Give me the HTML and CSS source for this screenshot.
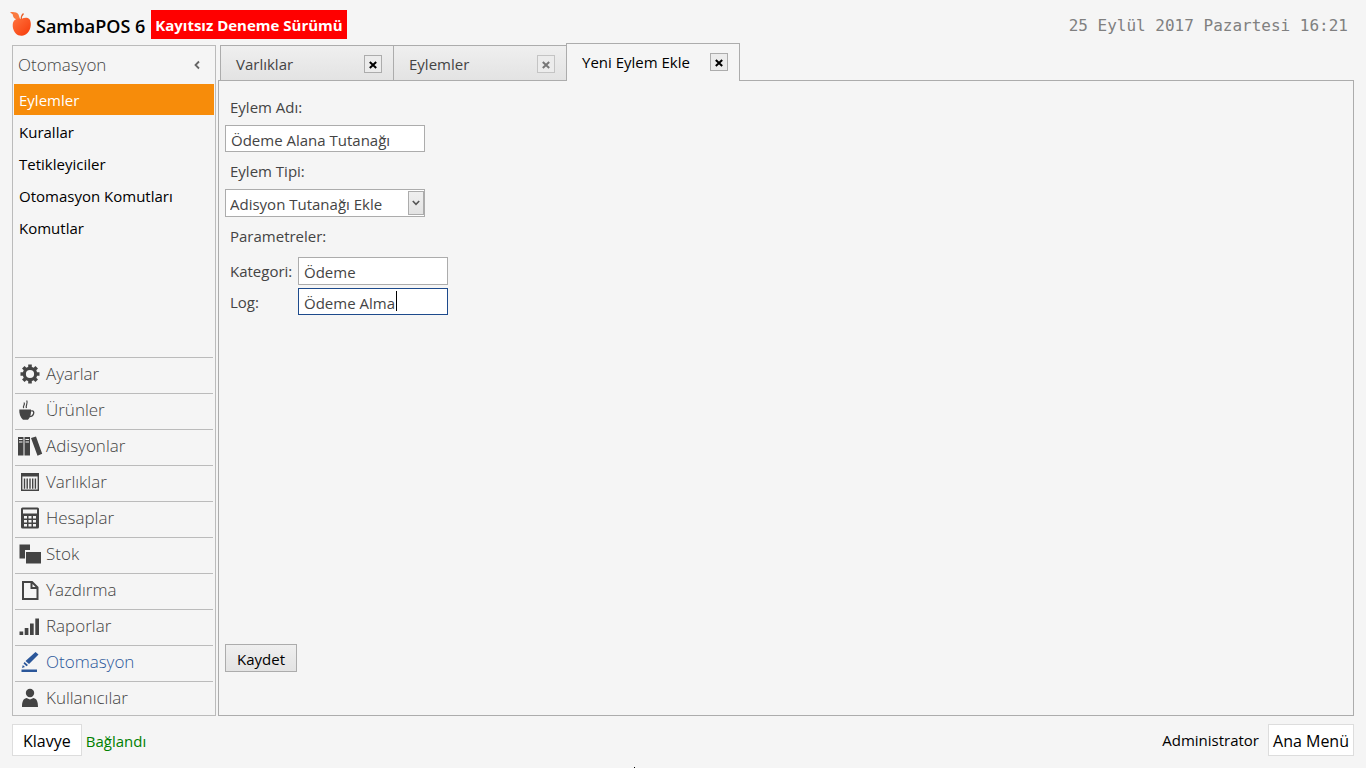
FILE: index.html
```html
<!DOCTYPE html>
<html lang="tr">
<head>
<meta charset="utf-8">
<meta name="viewport" content="width=device-width, initial-scale=1">
<title>SambaPOS 6</title>
<link rel="stylesheet" href="styles.css">
</head>
<body class="app">
<header class="topbar">
  <svg class="logo" viewBox="0 0 22 26" aria-hidden="true">
    <defs><linearGradient id="fruit" x1="0" y1="0" x2="1" y2="1"><stop offset="0" stop-color="#ff7440"/><stop offset="1" stop-color="#f63a08"/></linearGradient></defs>
    <path fill="#fa7a40" d="M0 .3C3-.3 7 0 8.500 2.500l1.700 5C5.500 8 2.800 6 2.800 2.500z"/>
    <path fill="none" stroke="#e8622c" stroke-width="1.300" d="M11.500 7.500C11 5.500 11.500 3.500 13.500 1.500"/>
    <path fill="url(#fruit)" d="M11.500 7C14 5.500 17.500 5.200 19.300 7c2.500 3 2 10.500-1.800 14-2 1.900-3.700 2.500-5.500 2.700-2.200.2-4.700-.5-6.200-2.200C2.300 18 1.800 11 4.200 8.500c1.800-2 4.800-2.700 7.300-1.500z"/>
  </svg>
  <h1 class="brand">SambaPOS 6</h1>
  <span class="trial">Kayıtsız Deneme Sürümü</span>
  <time class="clock" datetime="2017-09-25T16:21">25 Eylül 2017 Pazartesi 16:21</time>
</header>

<div class="workspace">
  <aside class="sidebar">
    <div class="side-head">
      <h2 class="side-title">Otomasyon</h2>
      <button class="collapse" type="button" aria-label="Daralt"><svg width="8" height="10" viewBox="0 0 8 10"><path d="M6 1.500 2.500 5 6 8.500" fill="none" stroke="#666" stroke-width="1.800"/></svg></button>
    </div>
    <nav class="submenu" aria-label="Otomasyon">
      <a class="sub-link current" href="#">Eylemler</a>
      <a class="sub-link" href="#">Kurallar</a>
      <a class="sub-link" href="#">Tetikleyiciler</a>
      <a class="sub-link" href="#">Otomasyon Komutları</a>
      <a class="sub-link" href="#">Komutlar</a>
    </nav>
    <nav class="modules" aria-label="Modüller">
      <a class="module" href="#"><svg class="icon" viewBox="0 0 26 24"><g fill="none" stroke="#444"><circle cx="13" cy="12" r="5.700" stroke-width="3.200"/><path stroke-width="3.600" d="M13 2.500v3M13 18.500v3M3.500 12h3M19.500 12h3M6.300 5.300l2 2M17.700 16.700l2 2M6.300 18.700l2-2M17.700 7.300l2-2"/></g></svg>Ayarlar</a>
      <a class="module" href="#"><svg class="icon" viewBox="0 0 26 24"><path fill="#444" d="M2.300 11.500H14c.3 4-.6 8-3 10.300H6C3.300 19.500 2 15.500 2.300 11.500z"/><path fill="none" stroke="#444" stroke-width="1.300" d="M14 13c2.500-.8 3.200 1 2.500 3-.6 1.700-2 2.600-4 2.700"/><path fill="none" stroke="#444" stroke-width="1.200" d="M6.800 10C5 8 8.800 7 7 4.500M9.500 10C8 7.500 11.500 5.500 9.700 2.500"/></svg>Ürünler</a>
      <a class="module" href="#"><svg class="icon" viewBox="0 0 26 24"><path fill="#444" d="M1 3h5.500v18.500H1zM7.500 3H13v18.500H7.500zM14 4l5-1.500 6.200 17.200-4.700 2z"/><path stroke="#f5f5f5" stroke-width="1.200" d="M2 5.500h3.500M2 8h3.500M8.500 5.500H12M8.500 8H12"/></svg>Adisyonlar</a>
      <a class="module" href="#"><svg class="icon" viewBox="0 0 26 24"><path fill="#444" d="M4 3h18v3.500H4z"/><path fill="none" stroke="#444" stroke-width="1.400" d="M4.700 6v14.300h16.600V6"/><path stroke="#444" stroke-width="1.400" d="M7.500 8.500v10.300M10.200 8.500v10.300M13 8.500v10.300M15.700 8.500v10.300M18.400 8.500v10.300"/></svg>Varlıklar</a>
      <a class="module" href="#"><svg class="icon" viewBox="0 0 26 24"><rect x="4" y="1.500" width="18" height="21" rx="1.500" fill="#444"/><path fill="#f5f5f5" d="M6 3.500h14v4H6zM7 10h3v2.500H7zM11.500 10h3v2.500h-3zM16 10h3v2.500h-3zM7 14h3v2.500H7zM11.500 14h3v2.500h-3zM16 14h3v2.500h-3zM7 18h3v2.500H7zM11.500 18h3v2.500h-3zM16 18h3v2.500h-3z"/></svg>Hesaplar</a>
      <a class="module" href="#"><svg class="icon" viewBox="0 0 26 24"><path fill="#444" d="M2.500 2.500H13V8H8v8.500H2.500zM9 10h15v11.500H9z"/></svg>Stok</a>
      <a class="module" href="#"><svg class="icon" viewBox="0 0 26 24"><path fill="none" stroke="#444" stroke-width="2" d="M6 4h9l5.500 5.500V21H6zM14.500 4v6h6"/></svg>Yazdırma</a>
      <a class="module" href="#"><svg class="icon" viewBox="0 0 26 24"><path fill="#444" d="M2.500 17.500h3.700V21H2.500zM7.700 14h3.700v7H7.700zM13 9.500h3.700V21H13zM18.300 4.500H22V21h-3.700z"/></svg>Raporlar</a>
      <a class="module active" href="#"><svg class="icon" viewBox="0 0 26 24"><path fill="#2b579a" d="M4.500 19.500H20V22H4.500zM18.500 2 21.500 4.500l-9.500 9.500-3.500-3zM7.500 12l3.500 3-1.500 1.300L6.500 13.500zM5.800 15 8 17 5 18z"/></svg>Otomasyon</a>
      <a class="module" href="#"><svg class="icon" viewBox="0 0 26 24"><circle cx="13" cy="7" r="4.200" fill="#444"/><path fill="#444" d="M5 21c0-5 1-8.300 4.500-9l3.500 1.500L16.500 12c3.500.7 4.500 4 4.500 9z"/></svg>Kullanıcılar</a>
    </nav>
  </aside>

  <main class="content">
    <div class="tabs">
      <div class="tab"><a class="tab-name" href="#">Varlıklar</a><button class="close" type="button" aria-label="Varlıklar sekmesini kapat"><svg width="8" height="8" viewBox="0 0 8 8"><path d="M.8 1l6.400 6M7.200 1 .8 7" stroke="currentColor" stroke-width="2"/></svg></button></div>
      <div class="tab"><a class="tab-name" href="#">Eylemler</a><button class="close dim" type="button" aria-label="Eylemler sekmesini kapat"><svg width="8" height="8" viewBox="0 0 8 8"><path d="M.8 1l6.400 6M7.200 1 .8 7" stroke="currentColor" stroke-width="2"/></svg></button></div>
      <div class="tab selected"><a class="tab-name" href="#">Yeni Eylem Ekle</a><button class="close" type="button" aria-label="Yeni Eylem Ekle sekmesini kapat"><svg width="8" height="8" viewBox="0 0 8 8"><path d="M.8 1l6.400 6M7.200 1 .8 7" stroke="currentColor" stroke-width="2"/></svg></button></div>
    </div>
    <form class="panel">
      <label class="label" for="name">Eylem Adı:</label>
      <input class="field wide" id="name" type="text" value="Ödeme Alana Tutanağı">
      <label class="label" for="type">Eylem Tipi:</label>
      <div class="picker">
        <select class="field wide select" id="type"><option>Adisyon Tutanağı Ekle</option></select>
        <span class="arrow"><svg width="8" height="6" viewBox="0 0 8 6"><path d="M.8 1 4 4.400 7.200 1" fill="none" stroke="#555" stroke-width="1.600"/></svg></span>
      </div>
      <span class="label">Parametreler:</span>
      <div class="params">
        <label for="category">Kategori:</label>
        <input class="field" id="category" type="text" value="Ödeme">
        <label for="log">Log:</label>
        <div class="editing">
          <input class="field focused" id="log" type="text" value="Ödeme Alma">
          <span class="caret"></span>
        </div>
      </div>
      <button class="save" type="button">Kaydet</button>
    </form>
  </main>
</div>

<footer class="bottombar">
  <button class="flat keyboard" type="button">Klavye</button>
  <span class="status">Bağlandı</span>
  <span class="user">Administrator</span>
  <button class="flat" type="button">Ana Menü</button>
</footer>
<span class="pointer"></span>
</body>
</html>
```

FILE: styles.css
```css
* { box-sizing: border-box; }

.app {
  margin: 0;
  min-height: 100vh;
  display: flex;
  flex-direction: column;
  background: #f5f5f5;
  color: #444;
  font: 15px/20px "Open Sans", "Noto Sans", sans-serif;
}

button, input, select { font: inherit; color: inherit; }
a { color: inherit; text-decoration: none; }

/* Top bar */
.topbar {
  display: flex;
  align-items: center;
  height: 43px;
  padding: 6px 18px 0 10px;
}
.logo { width: 22px; height: 26px; }
.brand {
  margin: 0 6px 0 4px;
  padding-top: 2px;
  color: #000;
  font-size: 18px;
  line-height: 24px;
  font-weight: 600;
}
.trial {
  padding: 5px 4px 3px;
  background: #f00;
  color: #fff;
  font-size: 15px;
  line-height: 21px;
  font-weight: 700;
}
.clock {
  margin-left: auto;
  padding-top: 2px;
  color: #808080;
  font: 16px/20px "DejaVu Sans Mono", monospace;
}

/* Sidebar */
.workspace {
  flex: 1;
  display: flex;
  gap: 2px;
  padding: 0 12px;
}
.sidebar {
  display: flex;
  flex-direction: column;
  width: 204px;
  margin-top: 2px;
  padding: 0 1px;
  border: 1px solid #bbb;
}
.side-head {
  display: flex;
  align-items: center;
  justify-content: space-between;
  height: 38px;
  padding: 0 13px 0 4px;
}
.side-title {
  margin: 0;
  color: #444;
  font-size: 17px;
  line-height: 24px;
  font-weight: 300;
}
.collapse {
  display: flex;
  padding: 0;
  border: 0;
  background: none;
}
.submenu { display: flex; flex-direction: column; color: #000; }
.sub-link { padding: 7px 5px 5px; }
.sub-link.current { padding-top: 6px; background: #f78c0a; color: #fff; }
.modules { margin-top: auto; }
.module {
  display: flex;
  align-items: center;
  gap: 3px;
  height: 36px;
  margin: 0 1px;
  padding: 0 2px 4px;
  border-top: 1px solid #bbb;
  color: #444;
  font-size: 17px;
  line-height: 24px;
  font-weight: 300;
}
.module:last-child { height: 34px; padding-bottom: 2px; }
.module.active { color: #2b579a; }
.icon { width: 26px; height: 24px; }

/* Tabs */
.content {
  flex: 1;
  display: flex;
  flex-direction: column;
  min-width: 0;
}
.tabs {
  display: flex;
  align-items: flex-end;
  height: 38px;
  padding-left: 2px;
}
.tab {
  display: flex;
  align-items: center;
  justify-content: space-between;
  width: 174px;
  height: 36px;
  margin-right: -1px;
  padding: 2px 11px 0 15px;
  border: 1px solid #acacac;
  background: linear-gradient(#efefef, #e3e3e3);
}
.tab.selected {
  z-index: 1;
  height: 38px;
  padding: 0 11px 1px 15px;
  border-bottom: 0;
  background: #f5f5f5;
  color: #000;
}
.close {
  display: flex;
  align-items: center;
  justify-content: center;
  width: 18px;
  height: 18px;
  padding: 2px 0 0;
  border: 1px solid #acacac;
  background: #ececec;
  color: #000;
}
.close.dim { border-color: #c4c4c4; color: #777; }

/* Form */
.panel {
  flex: 1;
  display: flex;
  flex-direction: column;
  align-items: flex-start;
  margin-top: -1px;
  padding: 16px 6px 43px;
  border: 1px solid #acacac;
}
.label { margin: 0 5px 8px; }
.field {
  width: 150px;
  height: 28px;
  padding: 2px 5px 0;
  border: 1px solid #acacac;
  border-radius: 0;
  background: #fff;
  outline: 0;
}
.field.wide { width: 200px; margin-bottom: 9px; }
input.wide { height: 27px; }
.field.focused { height: 27px; border-color: #1d4a8c; }
.picker { position: relative; }
.select { display: block; padding-left: 4px; appearance: none; }
.arrow {
  position: absolute;
  top: 2px;
  right: 1px;
  display: flex;
  align-items: center;
  justify-content: center;
  width: 16px;
  height: 24px;
  border: 1px solid #acacac;
  background: linear-gradient(#efefef, #e3e3e3);
  pointer-events: none;
}
.params {
  display: grid;
  grid-template-columns: 68px 150px;
  align-items: center;
  row-gap: 3px;
  margin: 3px 0 0 5px;
}
.editing { position: relative; display: flex; }
.caret {
  position: absolute;
  top: 3px;
  left: 98px;
  width: 1px;
  height: 20px;
  background: #000;
}
.save {
  height: 28px;
  margin-top: auto;
  padding: 2px 11px 0;
  border: 1px solid #acacac;
  background: linear-gradient(#efefef, #e3e3e3);
  color: #000;
}

/* Bottom bar */
.bottombar {
  display: flex;
  align-items: center;
  height: 52px;
  padding: 0 12px 4px;
  color: #000;
}
.flat {
  height: 32px;
  padding: 2px 4px 0;
  border: 1px solid #ddd;
  background: #fff;
  font-size: 16px;
}
.keyboard { padding: 2px 10px 0; }
.status { margin-left: 4px; padding-top: 2px; color: #008000; }
.user { margin: 0 9px 0 auto; }

.pointer {
  position: fixed;
  bottom: 0;
  left: 634px;
  width: 1px;
  height: 1px;
  background: #000;
}
```
